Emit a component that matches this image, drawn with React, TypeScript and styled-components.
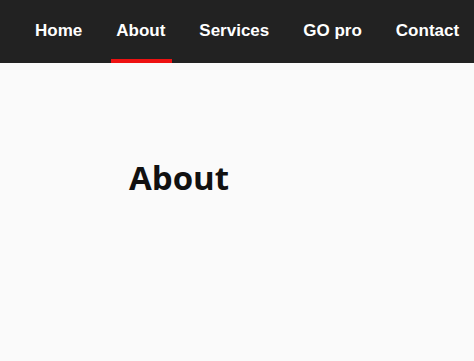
import React from 'react';
import styled, {createGlobalStyle} from 'styled-components';

const GlobalStyle = createGlobalStyle`
  html, body {
    margin: 0;
    padding: 0;
    background: #fafafa;
  }
  body {
    font-family: "Liberation Sans", Arial, sans-serif;
  }
`

const links = ['Home', 'About', 'Services', 'GO pro', 'Contact'];

const App = () => {
    const active = 'About';
    return (
        <>
            <GlobalStyle/>
            <Page>
                <NavBar>
                    <NavList>
                        {links.map(l =>
                            <NavLink key={l} href="#" $active={l === active}>{l}</NavLink>
                        )}
                    </NavList>
                </NavBar>
                <Content>
                    <Title>About</Title>
                </Content>
            </Page>
        </>
    );
};

export default App;

const Page = styled.div`
  min-height: 361px;
  background: #fafafa;
`

const NavBar = styled.nav`
  background: #222222;
  height: 63px;
  padding-left: 30px;
`

const NavList = styled.div`
  display: flex;
  gap: 22px;
  height: 100%;
`

const NavLink = styled.a<{ $active?: boolean }>`
  display: flex;
  align-items: center;
  padding: 2px 7px 0 5px;
  box-sizing: border-box;
  height: 63px;
  border-bottom: 4px solid ${p => p.$active ? '#ee1111' : 'transparent'};
  color: #ffffff;
  font-family: "Liberation Sans", Arial, sans-serif;
  font-weight: bold;
  font-size: 17px;
  text-decoration: none;
  white-space: nowrap;
`

const Content = styled.main`
  padding: 92px 0 0 129px;
`

const Title = styled.h1`
  margin: 0;
  font-family: "Open Sans", "DejaVu Sans", sans-serif;
  font-weight: 700;
  font-size: 33px;
  color: #111111;
`
